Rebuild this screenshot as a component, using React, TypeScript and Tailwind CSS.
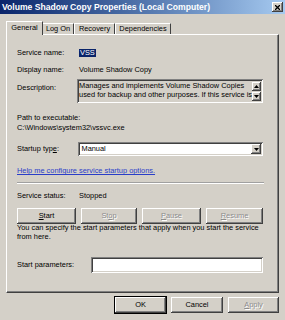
import React from 'react';

const raised =
  'shadow-[inset_-1px_-1px_#404040,inset_1px_1px_#ffffff,inset_-2px_-2px_#808080,inset_2px_2px_#d4d0c8]';
const sunken =
  'shadow-[inset_1px_1px_#808080,inset_-1px_-1px_#ffffff,inset_2px_2px_#404040,inset_-2px_-2px_#d4d0c8]';
const disabledText = 'text-[#8c8c8c] [text-shadow:1px_1px_0_#ffffff]';

function Btn({ children, disabled, w = 'w-[59px]', dark }: { children: React.ReactNode; disabled?: boolean; w?: string; dark?: boolean }) {
  return (
    <div
      className={`${w} h-[16px] flex items-center justify-center bg-[#d4d0c8] ${raised} ${dark ? 'outline outline-1 outline-[#000]' : ''} ${disabled ? disabledText : 'text-black'}`}
    >
      {children}
    </div>
  );
}

function ScrollArrow({ up }: { up?: boolean }) {
  return (
    <div className={`w-[9px] h-[9px] flex items-center justify-center bg-[#d4d0c8] ${raised}`}>
      <svg width="5" height="3" viewBox="0 0 5 3">
        <polygon points={up ? '2.5,0 5,3 0,3' : '0,0 5,0 2.5,3'} fill="#000" />
      </svg>
    </div>
  );
}

export default function App() {
  return (
    <div className="w-[285px] h-[320px] bg-[#d4d0c8] flex flex-col overflow-hidden text-[7.4px] leading-none text-black [font-family:'Liberation_Sans',Arial,sans-serif]">
      {/* title bar */}
      <div className="h-[14px] flex items-center justify-between pl-[2px] pr-[2px] bg-gradient-to-r from-[#0a246a] to-[#a6caf0]">
        <span className="text-white font-bold text-[8.6px]">Volume Shadow Copy Properties (Local Computer)</span>
        <div className={`w-[11px] h-[10px] flex items-center justify-center bg-[#d4d0c8] ${raised}`}>
          <svg width="5" height="5" viewBox="0 0 5 5">
            <path d="M0 0L5 5M5 0L0 5" stroke="#000" strokeWidth="1.3" />
          </svg>
        </div>
      </div>

      {/* tabs */}
      <div className="flex items-end pl-[6px] mt-[7px] h-[13px] relative z-10">
        <div className="w-[37px] h-[14px] -mb-[1px] bg-[#d4d0c8] border-l border-t border-white border-r border-r-[#404040] flex items-center justify-center pb-[1px]">
          General
        </div>
        <div className="w-[31px] h-[11px] bg-[#d4d0c8] border-t border-white border-r border-r-[#404040] flex items-center justify-center">
          Log On
        </div>
        <div className="w-[41px] h-[11px] bg-[#d4d0c8] border-l border-t border-white border-r border-r-[#404040] flex items-center justify-center">
          Recovery
        </div>
        <div className="w-[56px] h-[11px] bg-[#d4d0c8] border-l border-t border-white border-r border-r-[#404040] flex items-center justify-center">
          Dependencies
        </div>
      </div>

      {/* panel */}
      <div className="mx-[6px] h-[259px] border-l border-t border-white border-r border-b border-r-[#404040] border-b-[#404040] shadow-[inset_-1px_-1px_#808080] flex flex-col pl-[10px] pr-[15px] whitespace-nowrap">
        <div className="flex items-center mt-[13px] h-[10px]">
          <span className="w-[62px]">Service name:</span>
          <span className="bg-[#0a246a] text-white px-[1px]">VSS</span>
        </div>
        <div className="flex items-center mt-[7px] h-[10px]">
          <span className="w-[62px]">Display name:</span>
          <span>Volume Shadow Copy</span>
        </div>
        <div className="flex mt-[4px]">
          <span className="w-[62px] mt-[5px]">Description:</span>
          <div className={`w-[186px] h-[24px] flex justify-between pl-[2px] pt-[2px] pr-[2px] bg-[#d4d0c8] ${sunken}`}>
            <div className="leading-[9px] overflow-hidden">
              Manages and implements Volume Shadow Copies
              <br />
              used for backup and other purposes. If this service is
            </div>
            <div className="flex flex-col gap-[1px] pt-[1px]">
              <ScrollArrow up />
              <ScrollArrow />
            </div>
          </div>
        </div>
        <div className="mt-[10px] h-[10px] flex items-center">Path to executable:</div>
        <div className="h-[10px] flex items-center">C:\Windows\system32\vssvc.exe</div>
        <div className="flex items-center mt-[9px]">
          <span className="w-[62px]">
            Startup typ<span className="underline">e</span>:
          </span>
          <div className={`w-[186px] h-[14px] flex items-center justify-between bg-white pl-[3px] pr-[2px] ${sunken}`}>
            <span>Manual</span>
            <div className={`w-[10px] h-[10px] flex items-center justify-center bg-[#d4d0c8] ${raised}`}>
              <svg width="5" height="3" viewBox="0 0 5 3">
                <polygon points="0,0 5,0 2.5,3" fill="#000" />
              </svg>
            </div>
          </div>
        </div>
        <div className="mt-[10px] h-[10px] flex items-center text-[#2a3ec8] underline">
          Help me configure service startup options.
        </div>
        <div className="mt-[6px] w-[247px] border-t border-[#a0a0a0] border-b border-b-white" />
        <div className="flex items-center mt-[7px] h-[10px]">
          <span className="w-[62px]">Service status:</span>
          <span>Stopped</span>
        </div>
        <div className="flex gap-[5px] mt-[7px]">
          <Btn w="w-[60px]">
            <span className="underline">S</span>tart
          </Btn>
          <Btn disabled w="w-[57px]">
            St<span className="underline">o</span>p
          </Btn>
          <Btn disabled w="w-[60px]">
            <span className="underline">P</span>ause
          </Btn>
          <Btn disabled w="w-[58px]">
            <span className="underline">R</span>esume
          </Btn>
        </div>
        <div className="mt-[0px] leading-[8.5px]">
          You can specify the start parameters that apply when you start the service
          <br />
          from here.
        </div>
        <div className="flex items-center mt-[16px]">
          <span className="w-[75px]">Start parameters:</span>
          <div className={`w-[173px] h-[16px] bg-white ${sunken}`} />
        </div>
      </div>

      {/* bottom buttons */}
      <div className="flex justify-end gap-[5px] pr-[6px] mt-[4px]">
        <Btn w="w-[51px]" dark>OK</Btn>
        <Btn w="w-[52px]">Cancel</Btn>
        <Btn w="w-[51px]" disabled>
          <span className="underline">A</span>pply
        </Btn>
      </div>
    </div>
  );
}
